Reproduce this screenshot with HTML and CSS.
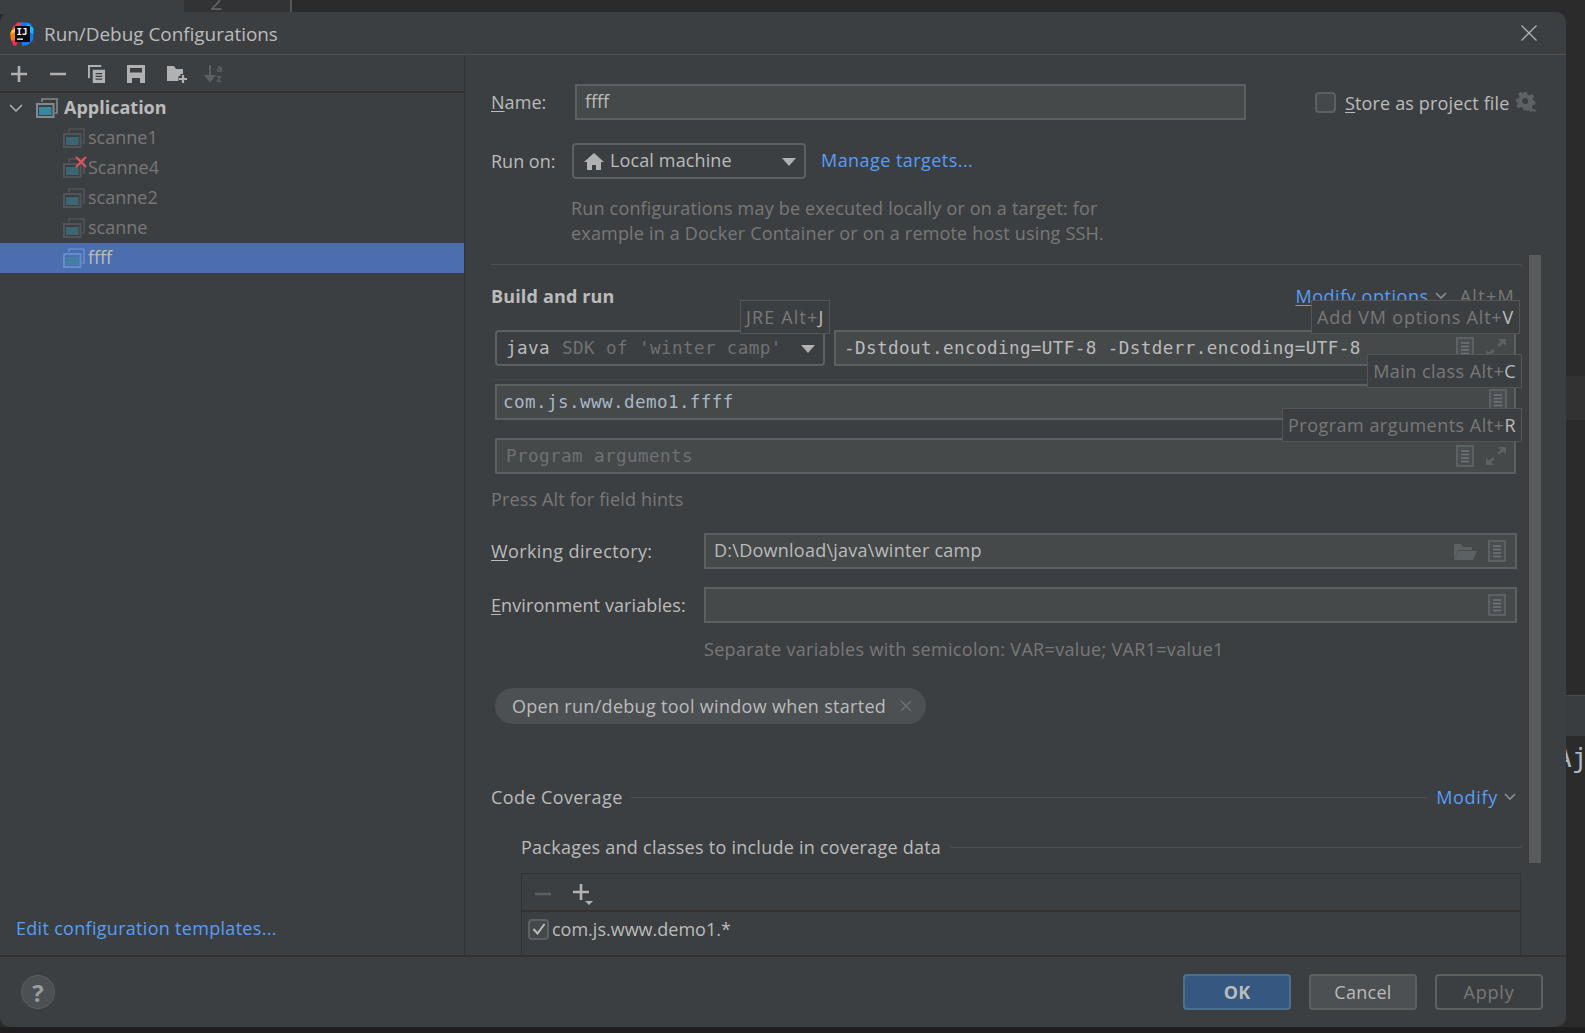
FILE: index.html
```html
<!DOCTYPE html>
<html lang="en">
<head>
<meta charset="utf-8">
<title>Run/Debug Configurations</title>
<link rel="stylesheet" href="styles.css">
</head>
<body>
<svg class="defs" width="0" height="0" aria-hidden="true">
  <symbol id="win" viewBox="0 0 22 20">
    <path d="M6 4V1h15v14h-2" fill="none" stroke="currentColor" stroke-width="1.6"/>
    <rect x="1" y="6" width="16.5" height="13" fill="none" stroke="currentColor" stroke-width="2"/>
    <rect x="3" y="9" width="12.5" height="8" fill="#3e86a0"/>
  </symbol>
  <symbol id="doc" viewBox="0 0 18 22">
    <rect x="1" y="1" width="16" height="20" fill="#4a4e50" stroke="#5c6164" stroke-width="2"/>
    <path d="M5 6h8M5 9.500h8M5 13h8M5 16.500h8" stroke="#70757a" stroke-width="1.300"/>
  </symbol>
  <symbol id="expand" viewBox="0 0 20 18">
    <path d="M12 0h8v7l-3-2.500-3.500 3.500-2.200-2.200L14.800 2.500zM8 18H0v-7l3 2.500 3.500-3.500 2.200 2.200-3.500 3.300z" fill="#5c6164"/>
  </symbol>
</svg>

<div class="editor">
  <div class="editor-a"></div>
  <div class="editor-gutter"><span>2</span></div>
</div>
<div class="editor-strip one"></div>
<div class="editor-strip two"></div>
<div class="editor-j">Aj</div>

<div class="dialog">
  <header class="titlebar">
    <svg class="logo" width="26" height="26" viewBox="0 0 26 26">
      <path d="M3 7 9 1l6 2-4 8-8 4z" fill="#fe315d"/>
      <path d="M1 12l5-4 3 9-4 6-3-4z" fill="#f97a12"/>
      <path d="M2 10l4-3 1 3-4 3z" fill="#f9d423"/>
      <path d="M12 1l9 1 4 6-1 11-5 5-6 1z" fill="#087cfa"/>
      <path d="M18 2l6 5v6l-5-3z" fill="#07c3f2"/>
      <path d="M3 19l6 1-2 5-3-1z" fill="#fe2857"/>
      <rect x="6" y="5" width="15" height="16" fill="#0a0a0a"/>
      <rect x="8" y="17.500" width="6" height="1.300" fill="#fff"/>
      <text x="7.500" y="14" class="logo-text">IJ</text>
    </svg>
    <span class="title">Run/Debug Configurations</span>
    <svg class="close" width="16" height="16" viewBox="0 0 16 16"><path d="M.5.5l15 15M15.500.5l-15 15" stroke="#afb1b3" stroke-width="1.300"/></svg>
  </header>

  <div class="body">
    <aside class="side">
      <div class="side-tools">
        <svg class="ti" width="18" height="18" viewBox="0 0 18 18"><path d="M9 1v16M1 9h16" stroke="#afb1b3" stroke-width="2.600"/></svg>
        <svg class="ti" width="18" height="18" viewBox="0 0 18 18"><path d="M1 9h16" stroke="#afb1b3" stroke-width="2.600"/></svg>
        <svg class="ti" width="18" height="19" viewBox="0 0 19 20"><path d="M1 14V1h13" fill="none" stroke="#afb1b3" stroke-width="2"/><rect x="5" y="5" width="13" height="14" fill="#afb1b3"/><path d="M8 9h7M8 12h7M8 15h7" stroke="#3c3f41" stroke-width="1.300"/></svg>
        <svg class="ti" width="18" height="18" viewBox="0 0 18 18"><path d="M0 0h18v18H0z" fill="#afb1b3"/><rect x="3" y="3" width="12" height="4.500" fill="#3c3f41"/><rect x="5" y="13" width="8" height="5" fill="#3c3f41"/></svg>
        <svg class="ti" width="22" height="20" viewBox="0 0 22 20"><path d="M1 2h7l2 3h7v12H1z" fill="#afb1b3"/><path d="M17 10v9M12.500 14.500h9" stroke="#3c3f41" stroke-width="5"/><path d="M17 11v8M13 15h8" stroke="#afb1b3" stroke-width="2.200"/></svg>
        <svg class="ti sort" width="20" height="24" viewBox="0 -2 20 24"><path d="M6 1v14M2 12l4 5 4-5z" stroke="#5d6062" stroke-width="2" fill="#5d6062"/><text x="12.500" y="7.500" class="sort-a">a</text><text x="12.500" y="18" class="sort-a">z</text></svg>
      </div>
      <div class="tree">
        <div class="row root">
          <svg class="chev" width="14" height="9" viewBox="0 0 14 9"><path d="M1 1l6 6 6-6" fill="none" stroke="#afb1b3" stroke-width="1.500"/></svg>
          <svg class="win-root"><use href="#win"/></svg>
          <span>Application</span>
        </div>
        <div class="row child"><svg class="win-child"><use href="#win"/></svg><span>scanne1</span></div>
        <div class="row child"><svg class="win-child"><use href="#win"/></svg><svg class="err" width="12" height="12" viewBox="0 0 12 12"><path d="M1 1l10 10M11 1 1 11" stroke="#e05561" stroke-width="2"/></svg><span>Scanne4</span></div>
        <div class="row child"><svg class="win-child"><use href="#win"/></svg><span>scanne2</span></div>
        <div class="row child"><svg class="win-child"><use href="#win"/></svg><span>scanne</span></div>
        <div class="row child selected"><svg class="win-child"><use href="#win"/></svg><span>ffff</span></div>
      </div>
      <a class="link templates">Edit configuration templates...</a>
    </aside>

    <main class="form">
      <div class="f-name">
        <label class="lbl-name"><u>N</u>ame:</label>
        <div class="input name-input">ffff</div>
        <div class="store">
          <span class="check"></span>
          <span class="store-text"><u>S</u>tore as project file</span>
          <svg class="gear" width="21" height="22" viewBox="0 0 21 22"><path d="M8 1h4l.600 3 2 .900 2.600-1.600 2.600 2.800-1.700 2.500.800 2 2.100.500v3.800l-2.900.700-.800 2 1.600 2.500-2.700 2.600-2.500-1.600-2 .800L12 21H8l-.600-2.800-2-.800-2.500 1.600-2.700-2.700 1.600-2.500-.800-2L0 12.200V8.600l3-.700.800-2L2.200 3.400 4.900.800l2.500 1.600 .600-.300z" fill="#5d6164" transform="scale(.92)"/><circle cx="9.200" cy="10" r="3" fill="#3c3f41"/><path d="M15 18.500h6l-3 3z" fill="#5d6164"/></svg>
        </div>
      </div>

      <div class="f-run">
        <label class="lbl-run">Run on:</label>
        <div class="combo run-combo">
          <svg width="20" height="17" viewBox="0 0 20 17"><path d="M10 0 0 9h3v8h5v-5h4v5h5V9h3z" fill="#afb1b3"/></svg>
          <span class="local">Local machine</span>
          <i class="caret"></i>
        </div>
        <a class="link manage">Manage targets...</a>
      </div>

      <p class="muted desc">Run configurations may be executed locally or on a target: for<br>example in a Docker Container or on a remote host using SSH.</p>
      <div class="sep"></div>

      <div class="f-head">
        <strong>Build and run</strong>
        <div class="modify"><a class="link modify-link"><u>M</u>odify options</a><svg width="12" height="8" viewBox="0 0 12 8"><path d="M1 1l5 5 5-5" fill="none" stroke="#8c8f91" stroke-width="1.600"/></svg><span class="muted alt-m">Alt+M</span></div>
      </div>

      <div class="f-jre">
        <div class="combo mono jre"><span class="jv">java</span><span class="faint">SDK of 'winter camp'</span><i class="caret"></i></div>
        <div class="input mono vm">-Dstdout.encoding=UTF-8 -Dstderr.encoding=UTF-8
          <svg class="ico ic-a"><use href="#doc"/></svg><svg class="ico ic-b"><use href="#expand"/></svg>
        </div>
      </div>
      <div class="faint-line"></div>
      <div class="input mono main-class"><span class="cls">com.js.www.demo1.ffff</span><svg class="ico ic-main"><use href="#doc"/></svg></div>
      <div class="input mono args"><span class="faint">Program arguments</span><svg class="ico ic-a"><use href="#doc"/></svg><svg class="ico ic-b"><use href="#expand"/></svg></div>

      <p class="muted hint">Press Alt for field hints</p>

      <div class="f-dir">
        <label class="lbl-dir lbl-work"><u>W</u>orking directory:</label>
        <div class="input dir dir-value">D:\Download\java\winter camp
          <svg class="ico folder" viewBox="0 0 24 18"><path d="M1 1h7l2 3h9v3H5L1 16z" fill="#5c6164"/><path d="M5 8h19l-4 9H1z" fill="#5c6164"/></svg>
          <svg class="ico ic-single"><use href="#doc"/></svg>
        </div>
      </div>
      <div class="f-env">
        <label class="lbl-dir lbl-env"><u>E</u>nvironment variables:</label>
        <div class="input dir"><svg class="ico ic-single"><use href="#doc"/></svg></div>
      </div>
      <p class="muted sep-hint">Separate variables with semicolon: VAR=value; VAR1=value1</p>

      <div class="chip">Open run/debug tool window when started
        <svg width="12" height="12" viewBox="0 0 12 12"><path d="M1 1l10 10M11 1 1 11" stroke="#6e7173" stroke-width="1.300"/></svg>
      </div>

      <div class="f-cov">
        <span class="cov-label">Code Coverage</span><i class="line"></i>
        <a class="link cov-link">Modify</a>
        <svg width="12" height="8" viewBox="0 0 12 8"><path d="M1 1l5 5 5-5" fill="none" stroke="#8c8f91" stroke-width="1.600"/></svg>
      </div>
      <div class="f-pkg"><span class="pkg-label">Packages and classes to include in coverage data</span><i class="line"></i></div>

      <div class="table">
        <div class="table-tools">
          <svg width="16" height="4" viewBox="0 0 16 4"><path d="M0 2h16" stroke="#5d6062" stroke-width="2.600"/></svg>
          <svg width="20" height="22" viewBox="0 0 20 22"><path d="M8 1v16M0 9h16" stroke="#afb1b3" stroke-width="2.600"/><path d="M12 18h8l-4 4z" fill="#afb1b3"/></svg>
        </div>
        <div class="table-row">
          <span class="check on"><svg width="14" height="12" viewBox="0 0 14 12"><path d="M1.500 6l4 4.500L12.500 1" fill="none" stroke="#bbbbbb" stroke-width="2"/></svg></span>
          <span>com.js.www.demo1.*</span>
        </div>
      </div>

      <div class="tip tip-jre">JRE Alt+<b>J</b></div>
      <div class="tip tip-vm">Add VM options Alt+<b>V</b></div>
      <div class="tip tip-main">Main class Alt+<b>C</b></div>
      <div class="tip tip-args">Program arguments Alt+<b>R</b></div>
      <div class="scrollbar"></div>
    </main>
  </div>

  <footer class="footer">
    <span class="help">?</span>
    <div class="buttons">
      <button class="btn ok">OK</button>
      <button class="btn cancel">Cancel</button>
      <button class="btn apply">Apply</button>
    </div>
  </footer>
</div>
</body>
</html>
```

FILE: styles.css
```css
* { box-sizing: border-box; }
html, body { margin: 0; height: 100%; }
body {
  position: relative;
  width: 1585px;
  height: 1033px;
  overflow: hidden;
  background: #1f1f1f;
  font-family: "Open Sans", "Noto Sans", sans-serif;
  font-size: 18px;
  color: #bbbbbb;
}
.defs { position: absolute; }
p { margin: 0; }
u { text-underline-offset: 2px; }

.editor { position: absolute; inset: 0 0 6px 0; background: #2b2b2b; }
.editor-a { position: absolute; left: 0; top: 0; width: 184px; height: 14px; background: #3c3f41; }
.editor-gutter {
  position: absolute; left: 184px; top: 0; width: 108px; height: 14px;
  padding-left: 26px;
  background: #313335; border-right: 2px solid #555555;
  overflow: hidden; color: #606366; line-height: 14px; font-size: 22px;
}
.editor-gutter span { position: relative; top: -6px; }
.editor-strip { position: absolute; left: 1560px; right: 0; }
.editor-strip.one { top: 376px; height: 44px; background: #323232; }
.editor-strip.two { top: 695px; height: 41px; background: #3a3d3f; border-top: 1px solid #4a4a4a; }
.editor-j { position: absolute; left: 1556px; top: 740px; font: 26px/36px "DejaVu Sans Mono", monospace; color: #a9b7c6; }

.dialog {
  position: absolute; left: 0; top: 12px;
  width: 1566px; height: 1015px;
  display: flex; flex-direction: column;
  background: #3c3f41;
  border-radius: 10px;
  overflow: hidden;
}

.titlebar {
  height: 43px; flex: none;
  display: flex; align-items: center;
  padding: 1px 16px 0 9px;
  border-bottom: 1px solid #515151;
}
.logo { flex: none; }
.logo-text { font: bold 9px "DejaVu Sans Mono", monospace; fill: #fff; }
.title { margin-left: 9px; font-size: 18.900px; }
.close { margin-left: auto; margin-right: 13px; margin-top: -1px; }

.body { flex: 1; display: flex; min-height: 0; }
.side {
  width: 465px; flex: none;
  display: flex; flex-direction: column;
  border-right: 1px solid #323232;
}
.side-tools {
  height: 38px; flex: none;
  display: flex; align-items: center;
  padding: 2px 0 0 10px; gap: 20px;
  border-bottom: 2px solid #323232;
}
.ti { flex: none; margin-right: 1px; }
.sort { margin-left: -5px; }
.sort-a { font: bold 10px "Open Sans", sans-serif; fill: #5d6062; }
.tree { flex: 1; }
.row { height: 30px; display: flex; align-items: center; position: relative; }
.row span { padding-bottom: 2px; }
.root { font-weight: 700; padding-left: 9px; }
.chev { margin-right: 13px; }
.win-root { width: 22px; height: 20px; color: #7f8b91; margin-right: 6px; }
.win-child { width: 22px; height: 20px; color: #636769; margin-left: 63px; margin-right: 3px; opacity: .55; }
.child { color: #787878; }
.err { position: absolute; left: 75px; top: 3px; }
.selected { background: #4b6eaf; color: #bbbbbb; }
.selected .win-child { color: #6f96d4; opacity: .75; }
.link { color: #589df6; text-decoration: none; }
.templates { margin: 0 0 14px 16px; line-height: 25px; letter-spacing: .3px; }

.form { flex: 1; position: relative; padding: 29px 0 0 26px; overflow: hidden; }
.input {
  position: relative;
  height: 36px; display: flex; align-items: center;
  background: #45494a; border: 2px solid #5d6062;
  padding-left: 8px; white-space: nowrap;
}
.mono { font-family: "DejaVu Sans Mono", monospace; font-size: 17.600px; letter-spacing: .4px; }
.combo {
  position: relative;
  height: 36px; display: flex; align-items: center;
  background: #3c3f41; border: 2px solid #5d6062; border-radius: 4px;
}
.caret {
  position: absolute; right: 8px; top: 13px;
  width: 0; height: 0;
  border-left: 7.500px solid transparent; border-right: 7.500px solid transparent; border-top: 8px solid #afb1b3;
}
.check {
  width: 21px; height: 21px; flex: none;
  display: inline-flex; align-items: center; justify-content: center;
  background: #43494a; border: 2px solid #5d6062; border-radius: 4px;
}
.ico { position: absolute; width: 18px; height: 22px; top: 5px; }
.ic-a { right: 40px; }
.ic-b { right: 8px; width: 20px; height: 18px; top: 7px; }
.ic-single { right: 9px; }
.ic-main { right: 7px; top: 3px; }
.folder { right: 38px; width: 24px; height: 18px; top: 8px; }

.f-name { display: flex; align-items: center; height: 36px; }
.lbl-name { width: 84px; flex: none; letter-spacing: .05px; margin-bottom: 1px; }
.name-input { width: 671px; flex: none; padding-bottom: 2px; }
.store { display: flex; align-items: center; margin-left: 69px; gap: 9px; }
.store-text { letter-spacing: .15px; margin-top: 2px; }
.gear { margin-left: -2px; }

.f-run { display: flex; align-items: center; height: 36px; margin-top: 23px; }
.lbl-run { width: 81px; flex: none; padding-bottom: 1px; }
.run-combo { width: 234px; padding-left: 10px; gap: 6px; }
.local { letter-spacing: .13px; padding-bottom: 2px; }
.manage { margin-left: 15px; letter-spacing: .45px; padding-bottom: 2px; }
.muted { color: #787878; }
.desc { margin: 17px 0 0 80px; line-height: 25px; letter-spacing: .18px; }
.sep { height: 1px; width: 1030px; background: #515151; margin-top: 18px; }

.f-head { display: flex; align-items: center; justify-content: space-between; height: 30px; margin-top: 16px; width: 1030px; }
.f-head strong { letter-spacing: .15px; }
.modify { display: flex; align-items: center; gap: 6px; padding-right: 6px; }
.modify svg { margin-right: 7px; }
.modify-link { letter-spacing: .55px; }
.alt-m { letter-spacing: 1.300px; }

.f-jre { display: flex; margin: 19px 0 0 4px; gap: 9px; }
.jre { width: 330px; padding-left: 9px; }
.jv { margin-right: 12px; }
.faint { color: #6f7173; }
.vm { width: 682px; }
.faint-line { height: 1px; width: 880px; background: #434648; margin-top: 13px; }
.main-class { width: 1021px; margin: 4px 0 0 4px; padding: 0 0 0 6px; color: #a9b7c6; }
.args { width: 1021px; margin: 18px 0 0 4px; padding-left: 9px; }

.hint { margin-top: 13px; line-height: 25px; letter-spacing: .15px; }
.f-dir { display: flex; align-items: center; margin-top: 21px; }
.f-env { display: flex; align-items: center; margin-top: 18px; }
.lbl-dir { width: 213px; flex: none; }
.lbl-work { letter-spacing: .4px; }
.lbl-env { letter-spacing: .1px; }
.dir { width: 813px; }
.dir-value { letter-spacing: .25px; padding-bottom: 2px; }
.sep-hint { margin: 14px 0 0 213px; line-height: 25px; letter-spacing: .32px; }

.chip {
  display: inline-flex; align-items: center; gap: 14px;
  height: 36px; margin: 26px 0 0 4px; padding: 0 14px 0 17px;
  background: #4c5052; border-radius: 18px; letter-spacing: .3px;
}

.f-cov { display: flex; align-items: center; height: 26px; margin-top: 60px; width: 1025px; }
.line { flex: 1; height: 1px; background: #515151; }
.cov-label { letter-spacing: .4px; }
.cov-link { letter-spacing: .7px; }
.f-cov .line { margin: 0 9px 0 8px; }
.f-cov svg { margin-left: 6px; }
.f-pkg { display: flex; align-items: center; height: 26px; margin: 24px 0 0 30px; width: 1000px; }
.pkg-label { letter-spacing: .25px; }
.f-pkg .line { margin-left: 10px; }

.table { width: 1000px; margin: 13px 0 0 30px; border: 1px solid #323232; border-bottom: 0; height: 90px; }
.table-tools { height: 38px; display: flex; align-items: center; gap: 22px; padding: 3px 0 0 13px; border-bottom: 2px solid #323232; }
.table-row { height: 40px; display: flex; align-items: center; gap: 3px; padding: 0 0 6px 6px; }

.tip {
  position: absolute; height: 34px;
  display: flex; align-items: center;
  padding: 0 5px;
  background: #3c3f41; border: 1px solid #555555;
  color: #787878; white-space: nowrap;
}
.tip b { font-weight: 400; color: #bbbbbb; }
.tip-jre { left: 275px; top: 245px; letter-spacing: 1.150px; }
.tip-vm { right: 46px; top: 245px; letter-spacing: .8px; }
.tip-main { right: 44px; top: 299px; letter-spacing: .46px; }
.tip-args { right: 44px; top: 353px; letter-spacing: .48px; }
.scrollbar { position: absolute; left: 1064px; top: 200px; width: 12px; height: 608px; background: #595b5d; }

.footer {
  height: 72px; flex: none;
  display: flex; align-items: center; justify-content: space-between;
  padding: 0 23px 0 21px;
  border-top: 2px solid #323232;
}
.help {
  width: 34px; height: 34px; border-radius: 50%;
  display: flex; align-items: center; justify-content: center;
  background: #4c5052; border: 1px solid #5e6060;
  font-weight: 700; font-size: 24px; color: #9a9c9e;
}
.buttons { display: flex; gap: 18px; }
.btn {
  width: 108px; height: 36px;
  font: inherit; color: #bbbbbb;
  border-radius: 4px; border: 2px solid #5e6060; background: transparent; padding: 0;
}
.ok { background: #365880; border-color: #4c708c; font-weight: 700; }
.cancel { background: #4c5052; letter-spacing: .3px; }
.apply { color: #787878; letter-spacing: .8px; }
```
